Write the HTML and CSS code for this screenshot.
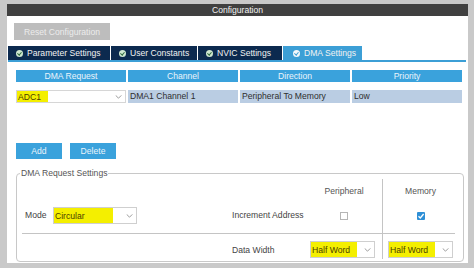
FILE: index.html
```html
<!DOCTYPE html>
<html lang="en">
<head>
  <meta charset="UTF-8" />
  <title>Configuration</title>
  <link rel="stylesheet" href="styles.css">
</head>
<body>
  <div class="window">
    <div class="title">Configuration</div>

    <div class="content">
      <button class="reset-btn">Reset Configuration</button>

      <!-- Tabs -->
      <div class="tabs">
        <div class="tab tab-1"><span class="tick"></span>Parameter Settings</div>
        <div class="tab tab-2"><span class="tick"></span>User Constants</div>
        <div class="tab tab-3"><span class="tick"></span>NVIC Settings</div>
        <div class="tab tab-4 active"><span class="tick"></span>DMA Settings</div>
      </div>

      <!-- DMA table -->
      <div class="dma-table">
        <div class="th">DMA Request</div>
        <div class="th">Channel</div>
        <div class="th">Direction</div>
        <div class="th">Priority</div>

        <div class="select req-select">
          <span class="hl">ADC1</span>
          <svg class="chev" viewBox="0 0 8 5"><path d="M0.5 0.5 L4 4 L7.5 0.5" /></svg>
        </div>
        <div class="td">DMA1 Channel 1</div>
        <div class="td">Peripheral To Memory</div>
        <div class="td">Low</div>
      </div>

      <div class="button-row">
        <button class="blue-btn">Add</button>
        <button class="blue-btn">Delete</button>
      </div>

      <!-- Request settings -->
      <fieldset class="settings">
        <legend>DMA Request Settings</legend>
        <div class="settings-grid">
          <div class="col-head periph-head">Peripheral</div>
          <div class="divider"></div>
          <div class="col-head mem-head">Memory</div>

          <div class="label mode-label">Mode</div>
          <div class="select mode-select">
            <span class="hl hl-wide">Circular</span>
            <svg class="chev" viewBox="0 0 8 5"><path d="M0.5 0.5 L4 4 L7.5 0.5" /></svg>
          </div>
          <div class="label inc-label">Increment Address</div>
          <div class="cell periph-cell"><span class="checkbox"></span></div>
          <div class="cell mem-cell">
            <span class="checkbox checked">
              <svg viewBox="0 0 8 8"><path d="M1.5 4.2 L3.3 6 L6.6 2" /></svg>
            </span>
          </div>

          <div class="hline"></div>

          <div class="label width-label">Data Width</div>
          <div class="cell periph-cell2">
            <div class="select width-select">
              <span class="hl">Half Word</span>
              <svg class="chev" viewBox="0 0 8 5"><path d="M0.5 0.5 L4 4 L7.5 0.5" /></svg>
            </div>
          </div>
          <div class="cell mem-cell2">
            <div class="select width-select">
              <span class="hl">Half Word</span>
              <svg class="chev" viewBox="0 0 8 5"><path d="M0.5 0.5 L4 4 L7.5 0.5" /></svg>
            </div>
          </div>
        </div>
      </fieldset>
    </div>
  </div>
</body>
</html>
```

FILE: styles.css
```css
body {
  margin: 0;
  padding: 0;
  background-color: #c9c9c9;
  font-family: "Liberation Sans", Arial, sans-serif;
  font-size: 8.6px;
  color: #3a3a3a;
}
.window {
  margin: 4px 6px 0 7px;
  height: 259px;
  background-color: #fff;
  display: flex;
  flex-direction: column;
}
.title {
  height: 12px;
  line-height: 12px;
  background-color: #404040;
  color: #f2f2f2;
  text-align: center;
}
.content {
  flex: 1;
  padding: 7px 2px 0 1px;
  display: flex;
  flex-direction: column;
  align-items: flex-start;
}
.reset-btn {
  margin-left: 6px;
  width: 96px;
  height: 17px;
  border: none;
  padding: 0;
  background-color: #bdbdbd;
  color: #ececec;
  font-family: inherit;
  font-size: 8.6px;
}

/* tabs */
.tabs {
  margin-top: 6px;
  display: flex;
  gap: 1px;
  width: 100%;
  border-bottom: 2px solid #3c9fd6;
}
.tab {
  height: 14px;
  line-height: 14px;
  background-color: #0c2a4f;
  color: #f2f2f2;
  padding-left: 8px;
  display: flex;
  align-items: center;
  gap: 4px;
  box-sizing: border-box;
}
.tab-1 { width: 102px; }
.tab-2 { width: 86px; }
.tab-3 { width: 84px; }
.tab-4 { width: 79px; padding-left: 10px; }
.tab.active {
  background-color: #3c9fd6;
}
.tick {
  width: 7px;
  height: 7px;
  border-radius: 50%;
  background-color: #cfe8d0;
  position: relative;
}
.tab.active .tick {
  background-color: #f4f8fb;
}
.tick::after {
  content: "";
  position: absolute;
  left: 2px;
  top: 1.3px;
  width: 1.5px;
  height: 3px;
  border: solid #2f6a3e;
  border-width: 0 1px 1px 0;
  transform: rotate(40deg);
}
.tab.active .tick::after {
  border-color: #3c9fd6;
}

/* table */
.dma-table {
  margin: 8px 0 0 8px;
  display: grid;
  grid-template-columns: 110px 110px 110px 110px;
  column-gap: 2px;
  row-gap: 8px;
}
.th {
  height: 12px;
  line-height: 12px;
  background-color: #3aa2dc;
  color: #eaf4fb;
  text-align: center;
}
.td {
  height: 13px;
  line-height: 13px;
  background-color: #bacde3;
  color: #2e2e2e;
  padding-left: 2px;
}
.select {
  position: relative;
  height: 13px;
  line-height: 13px;
  background-color: #fff;
  border: 1px solid #cfcfcf;
  box-sizing: border-box;
}
.hl {
  display: inline-block;
  background-color: #f4ef00;
  color: #4a3d00;
  padding: 0 7px 0 1px;
  height: 100%;
}
.chev {
  position: absolute;
  right: 3px;
  top: 4px;
  width: 7px;
  height: 4px;
  fill: none;
  stroke: #777;
  stroke-width: 0.9;
}
.req-select {
  border-color: #d6d6d6;
}

/* buttons */
.button-row {
  margin: 40px 0 0 8px;
  display: flex;
  gap: 8px;
}
.blue-btn {
  width: 46px;
  height: 16px;
  padding: 0;
  border: none;
  background-color: #3aa2dc;
  color: #eaf4fb;
  font-family: inherit;
  font-size: 8.6px;
}

/* settings */
.settings {
  margin: 9px 0 0 8px;
  width: 447px;
  height: 94px;
  box-sizing: border-box;
  border: 1px solid #c8c8c8;
  border-radius: 4px;
  padding: 6px 8px 0 8px;
}
.settings legend {
  padding: 0 1px;
  margin-left: -5px;
  color: #555;
}
.settings-grid {
  display: grid;
  grid-template-columns: 28px 84px 95px 78px 68px 8px 69px;
  grid-template-rows: 14px 8px 18px 9px 1px 7px 17px;
  align-items: center;
  color: #444;
}
.col-head {
  color: #555;
  text-align: center;
  grid-row: 1;
}
.periph-head { grid-column: 5; }
.mem-head { grid-column: 7; }
.divider {
  grid-column: 6;
  grid-row: 1 / 8;
  justify-self: center;
  align-self: stretch;
  width: 1px;
  background-color: #c4c4c4;
  margin: -5px 0 -1px;
}
.mode-label { grid-column: 1; grid-row: 3; }
.mode-select {
  grid-column: 2;
  grid-row: 3;
  height: 17px;
  line-height: 16px;
}
.hl-wide {
  padding-right: 28px;
}
.mode-select .chev { top: 6px; }
.inc-label { grid-column: 4; grid-row: 3; }
.periph-cell { grid-column: 5; grid-row: 3; text-align: center; }
.mem-cell { grid-column: 7; grid-row: 3; text-align: center; }
.hline {
  grid-column: 1 / 8;
  grid-row: 5;
  height: 1px;
  background-color: #c4c4c4;
  margin-left: -3px;
}
.width-label { grid-column: 4; grid-row: 7; }
.periph-cell2 { grid-column: 5; grid-row: 7; }
.mem-cell2 { grid-column: 7; grid-row: 7; }
.width-select {
  height: 17px;
  line-height: 16px;
  width: 65px;
}
.mem-cell2 .width-select { margin-left: 2px; }
.width-select .chev { top: 6px; }
.checkbox {
  display: inline-block;
  width: 8px;
  height: 8px;
  border: 1px solid #b5b5b5;
  box-sizing: border-box;
  vertical-align: middle;
  position: relative;
}
.checkbox.checked {
  border: none;
  background-color: #2e8fd6;
  border-radius: 1px;
}
.checkbox svg {
  position: absolute;
  left: 0;
  top: 0;
  width: 8px;
  height: 8px;
  fill: none;
  stroke: #fff;
  stroke-width: 1.3;
}
```
